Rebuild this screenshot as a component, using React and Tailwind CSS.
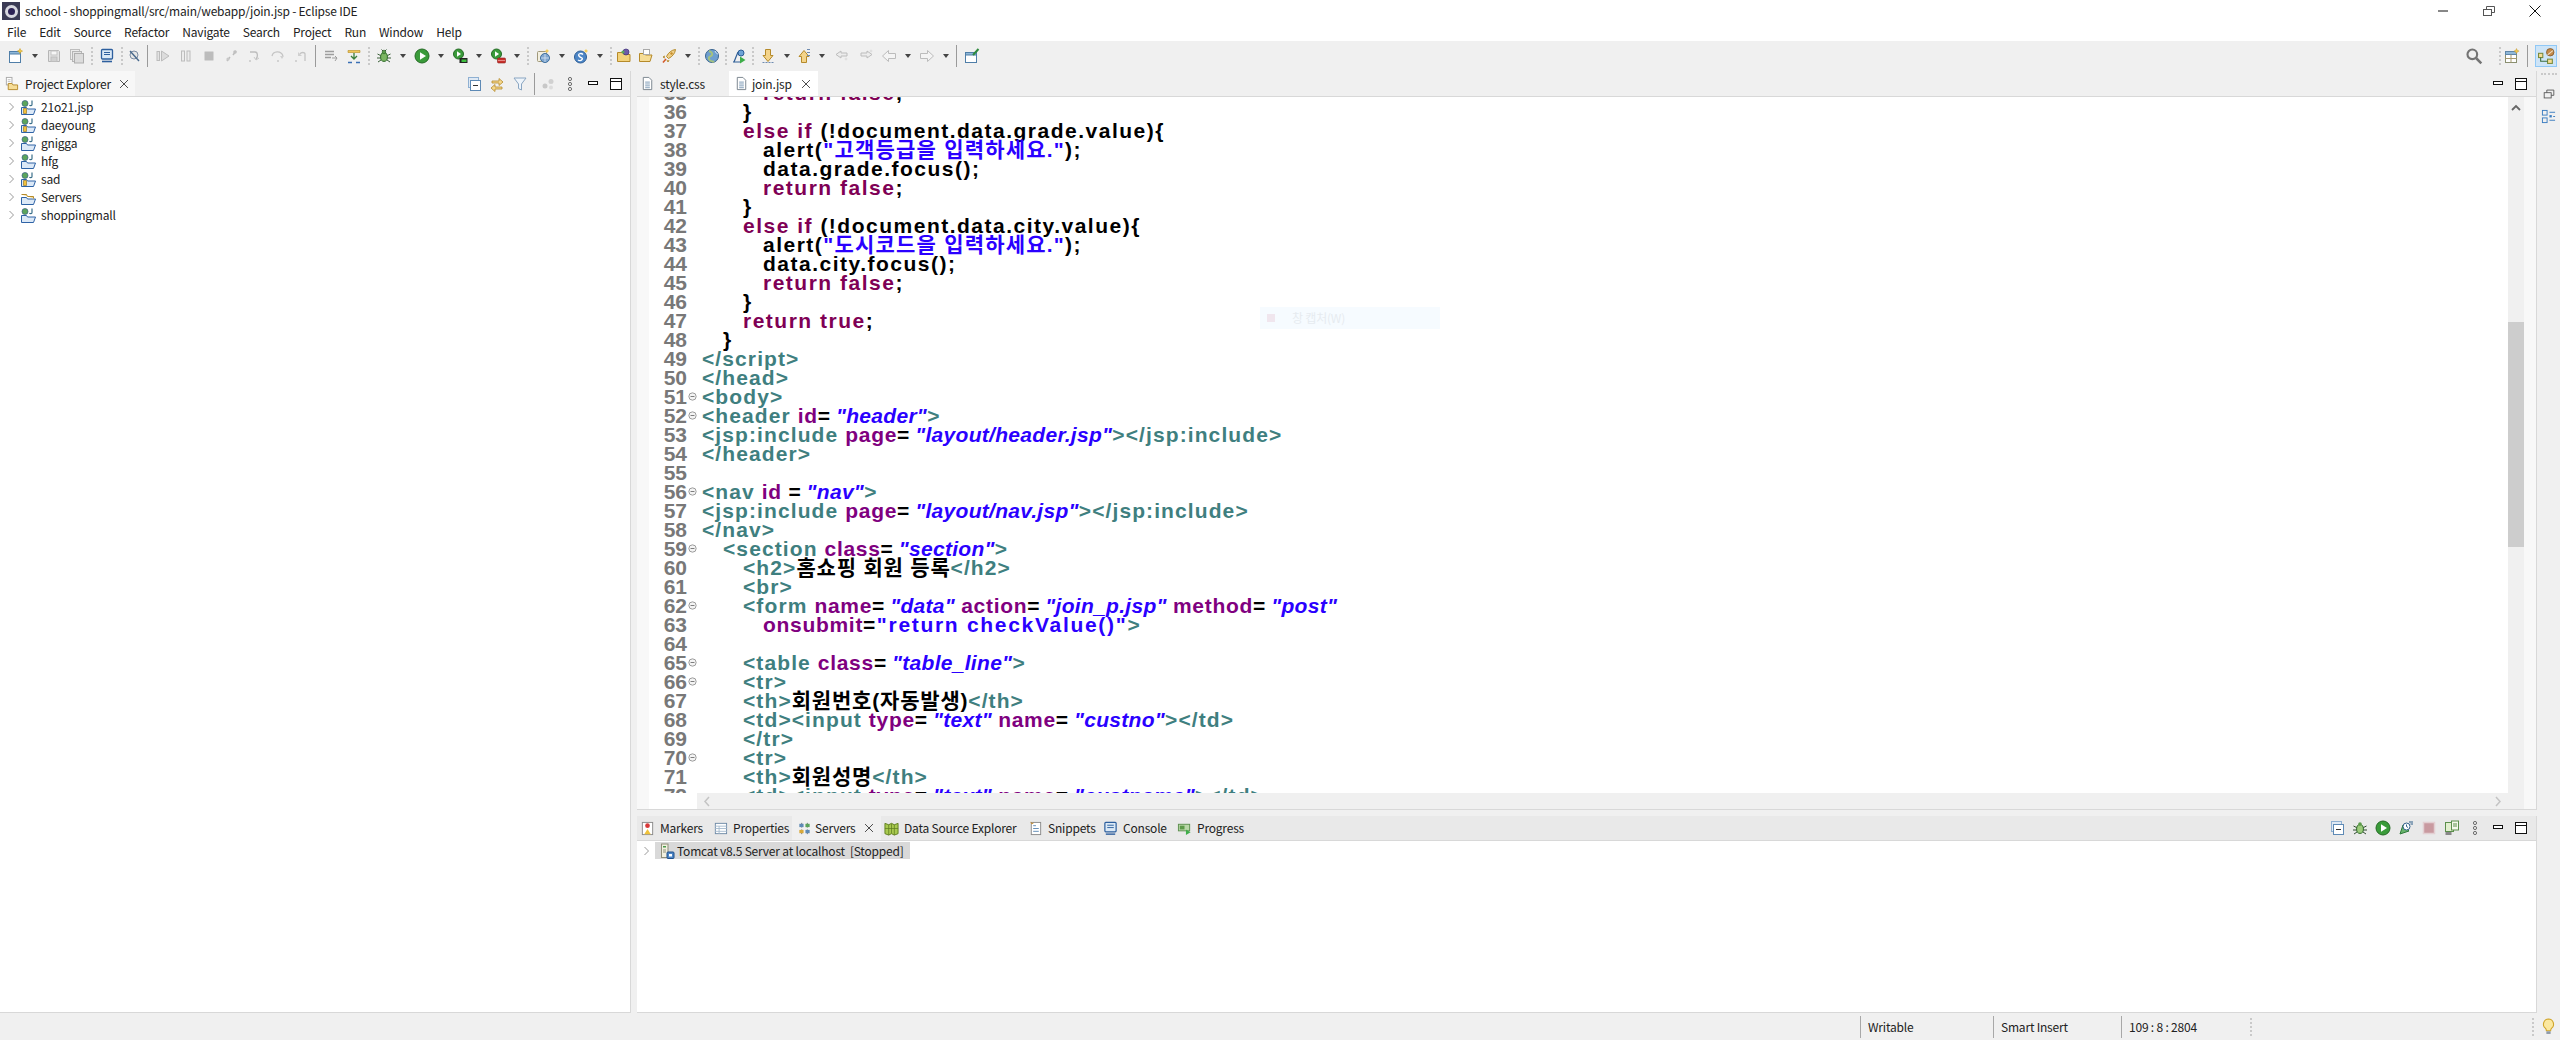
import React from "react";

const Svg = ({ size = 16, children, className = "" }) => (
    <svg width={size} height={size} viewBox="0 0 16 16" fill="none" className={className}>
        {children}
    </svg>
);

// toolbar + view icons, roughly how eclipse draws them
const icons = {
    newFile: <><rect x="1.5" y="3.5" width="11" height="11" fill="#fff" stroke="#4f7ea8" /><rect x="1.5" y="3.5" width="11" height="2.5" fill="#8fb7d8" stroke="#4f7ea8" /><path d="M12 .5l.8 1.8 1.8.8-1.8.8-.8 1.8-.8-1.8-1.8-.8 1.8-.8z" fill="#f3c94b" stroke="#c69a1e" strokeWidth=".5" /></>,
    save: <><path d="M2.5 2.5h10l1 1v10h-11z" fill="#e4e4e4" stroke="#b5b5b5" /><rect x="5" y="3" width="6" height="4" fill="#f6f6f6" stroke="#c4c4c4" /><rect x="5" y="9" width="6" height="4.5" fill="#d0d0d0" stroke="#bdbdbd" /></>,
    saveAll: <><rect x="1.5" y="1.5" width="9" height="10" fill="#ececec" stroke="#bdbdbd" /><rect x="3.5" y="3.5" width="9" height="10" fill="#e4e4e4" stroke="#b5b5b5" /><rect x="5.5" y="5.5" width="9" height="9.5" fill="#dcdcdc" stroke="#aeaeae" /></>,
    monitor: <><rect x="2.5" y="1.5" width="11" height="9.5" rx="1" fill="#dbe9f6" stroke="#2d5f9e" strokeWidth="1.3" /><path d="M5 4.5h6M5 6.5h6" stroke="#2d5f9e" /><path d="M3 13.5h10" stroke="#2d5f9e" strokeWidth="1.6" /></>,
    skip: <><circle cx="7" cy="7" r="4" fill="#e6e6e6" stroke="#7c8ca3" /><path d="M3 3l9 10" stroke="#47688c" strokeWidth="1.4" /></>,
    resume: <><rect x="2" y="3.5" width="2.5" height="9" fill="#e2e2e2" stroke="#bcbcbc" /><path d="M6.5 3l7.5 5-7.5 5z" fill="#dcdcdc" stroke="#bcbcbc" /></>,
    suspend: <><rect x="3.5" y="3" width="3" height="10" fill="#ececec" stroke="#bcbcbc" /><rect x="9" y="3" width="3" height="10" fill="#ececec" stroke="#bcbcbc" /></>,
    stop: <rect x="3.5" y="3.5" width="9" height="9" rx="1" fill="#bcbcbc" stroke="#d6d6d6" />,
    disconnect: <><path d="M3 13l3-4M9 7l3-4" stroke="#bcbcbc" strokeWidth="1.5" /><circle cx="4" cy="11" r="1.6" fill="#c8c8c8" /><circle cx="11" cy="4" r="1.8" fill="#c0c0c0" /></>,
    stepInto: <><path d="M3 4h5c3 0 3 5 1 7" stroke="#bdbdbd" strokeWidth="1.3" /><path d="M7 9l2 3 3-2" stroke="#c8c8c8" /><circle cx="3" cy="13" r="1" fill="#c8c8c8" /></>,
    stepOver: <><path d="M2 8c1-5 9-6 11 0" stroke="#c4c4c4" strokeWidth="1.3" /><path d="M10 8h4l-2 3z" fill="#d0d0d0" /><circle cx="8" cy="13" r="1" fill="#c8c8c8" /></>,
    stepReturn: <><path d="M12 13V6c0-2-4-2-5 0" stroke="#c4c4c4" strokeWidth="1.3" /><path d="M5 4v4h4z" fill="#d0d0d0" /><circle cx="3" cy="13" r="1" fill="#c8c8c8" /></>,
    dropFrame: <><path d="M2 3.5h9M2 6.5h9M2 9.5h6" stroke="#9d9d9d" strokeWidth="1.3" /><path d="M9 10h5l-2-2M14 10l-2 3" stroke="#9d9d9d" /></>,
    useFilters: <><path d="M2 2.5h12v2H2z" fill="#f0c75a" stroke="#b68c1f" strokeWidth=".6" /><path d="M8 5v6M5 8l3 3 3-3" stroke="#3b7f3b" strokeWidth="1.3" /><path d="M2 14.5h4M10 14.5h4" stroke="#3a6fb5" strokeWidth="1.4" /></>,
    bug: <><ellipse cx="8" cy="9" rx="3.4" ry="4.4" fill="#7bb661" stroke="#2f6b2a" /><circle cx="8" cy="4" r="1.8" fill="#5b9a49" stroke="#2f6b2a" strokeWidth=".7" /><path d="M1.5 6l3 1.5M14.5 6l-3 1.5M1 10h3.5M15 10h-3.5M2 14l3-2M14 14l-3-2M5.5 1.5L7 3M10.5 1.5L9 3" stroke="#264f24" strokeWidth=".9" /></>,
    run: <><circle cx="8" cy="8" r="7" fill="#3a9b3a" stroke="#256b25" /><path d="M6 4.2L12 8l-6 3.8z" fill="#fff" /></>,
    runServer: <><circle cx="6.5" cy="6" r="5" fill="#3a9b3a" stroke="#256b25" /><path d="M5 3.2L9 6 5 8.8z" fill="#fff" /><rect x="7.5" y="10" width="8" height="5" fill="#222" /><rect x="9.5" y="11.5" width="5" height="2.5" fill="#3fbf3f" /></>,
    runExt: <><circle cx="6.5" cy="6" r="5" fill="#3a9b3a" stroke="#256b25" /><path d="M5 3.2L9 6 5 8.8z" fill="#fff" /><rect x="7.5" y="10" width="8" height="5" rx="1" fill="#c9302c" stroke="#8e1d1a" strokeWidth=".6" /><path d="M8 12.5h7" stroke="#f1b0ae" strokeWidth=".7" /></>,
    server: <><rect x="2.5" y="3.5" width="9" height="10" rx="1" fill="#f2efe0" stroke="#a0987a" /><circle cx="10" cy="10" r="4.5" fill="#7fa6cf" stroke="#3d6f9f" /><path d="M6 10h8M10 6v8" stroke="#d7e6f4" strokeWidth=".8" /><path d="M12 .8l.7 1.5 1.5.7-1.5.7-.7 1.5-.7-1.5L9.8 3l1.5-.7z" fill="#f3c94b" /></>,
    spring: <><circle cx="7.5" cy="9" r="6" fill="#4d86c6" stroke="#2c5d96" /><path d="M10 6.5C8 4.5 4.5 6 6 8s4.5 1.5 3 3.5-4 .5-4 .5" stroke="#fff" strokeWidth="1.3" /><path d="M13 .8l.7 1.5 1.5.7-1.5.7-.7 1.5-.7-1.5-1.5-.7 1.5-.7z" fill="#f3c94b" /></>,
    openFolder: <><path d="M1.5 4.5h5l1.5 2h6v7h-12.500z" fill="#f3d27a" stroke="#b58a2a" /><circle cx="10" cy="4" r="3" fill="#6e5aa8" stroke="#3e2f78" strokeWidth=".7" /><circle cx="7" cy="4" r="1.6" fill="#5ba55b" /></>,
    openFile: <><path d="M1.500 5.500h5l1 1.500h6.500l-2 6.500H1.500z" fill="#f6dd97" stroke="#b58a2a" /><rect x="5.5" y="1.500" width="6" height="5" fill="#fff" stroke="#a9a9a9" /></>,
    rocket: <><path d="M14.500 1.500c-4 .5-7 3-9 7l2 2c4-2 6.500-5 7-9z" fill="#f0d08a" stroke="#b58a2a" /><path d="M5 11l-3 3.500" stroke="#d45a2a" strokeWidth="1.600" /><circle cx="10.500" cy="5.500" r="1.200" fill="#c58c2a" /><path d="M4 8l-2 1 2 1M8 12l-1 2-1-2" stroke="#b58a2a" /></>,
    globe: <><circle cx="8" cy="8" r="6.500" fill="#6e9fd0" stroke="#39648f" /><path d="M5 3c2 1 4 2 3 4S4 8 5 11s4 2 5 3" stroke="#a4c27f" strokeWidth="2" /><path d="M11 3c1 2 2 3 3 3" stroke="#dce9f4" strokeWidth="1" /></>,
    refPerson: <><circle cx="10" cy="5" r="3" fill="#6ea3d6" stroke="#2c5d96" /><path d="M3 14l4-10" stroke="#2c5d96" strokeWidth="1.200" /><path d="M2 14h7" stroke="#2c5d96" /><path d="M9 8.500l5.500 3.500-5.500 3.500z" fill="#3fae4a" /></>,
    nextAnn: <><path d="M5.500 1.500h5v6h2.500l-5 6-5-6h2.500z" fill="#f4d48a" stroke="#b58a2a" /><path d="M2.500 14.500h11" stroke="#6e8bb0" strokeWidth="1" strokeDasharray="2 1" /></>,
    prevAnn: <><path d="M5.500 14.500h5v-6h2.500l-5-6-5 6h2.500z" fill="#f4d48a" stroke="#b58a2a" /><path d="M11 1.500h3M11 4.500h3M11 7.500h3" stroke="#6e8bb0" /></>,
    lastEdit: <><path d="M7 3L2 6.500 7 10V8h6V5H7z" fill="#ececec" stroke="#bcbcbc" /><path d="M12 9l.5 1.500 1.500.5-1.500.5L12 13l-.5-1.500-1.500-.5 1.500-.5z" fill="#d8d8d8" /></>,
    lastEdit2: <><path d="M9 3l5 3.500L9 10V8H3V5h6z" fill="#ececec" stroke="#bcbcbc" /><path d="M13 1l.5 1.500L15 3l-1.500.5L13 5l-.5-1.500L11 3l1.500-.5z" fill="#d8d8d8" /></>,
    back: <path d="M7.500 2.500L1.500 8l6 5.500V10.500h7v-5h-7z" fill="#f4f4f4" stroke="#bcbcbc" />,
    forward: <path d="M8.500 2.500l6 5.500-6 5.500V10.500h-7v-5h7z" fill="#f4f4f4" stroke="#bcbcbc" />,
    pin: <><rect x="1.500" y="4.500" width="11" height="10" fill="#fff" stroke="#4f7ea8" /><rect x="1.500" y="4.500" width="11" height="2.500" fill="#8fb7d8" stroke="#4f7ea8" /><path d="M14.500 1L9 7" stroke="#2f8a3e" strokeWidth="2" /></>,
    collapse: <><rect x="2.500" y="1.500" width="10" height="10" fill="#dfe9f4" stroke="#8fb0d2" /><rect x="4.500" y="4.500" width="10" height="10" fill="#fff" stroke="#5e8ab5" /><path d="M7 9.500h5" stroke="#333" /></>,
    link: <><path d="M3 5h7V2.500L14 6l-4 3.500V7H3z" fill="#f5d88e" stroke="#b58a2a" strokeWidth=".8" /><path d="M13 11H6V8.500L2 12l4 3.500V13h7z" fill="#f5d88e" stroke="#b58a2a" strokeWidth=".8" /></>,
    filter: <path d="M2 2h12L9.500 8v6l-3 -1.500V8z" fill="#eef4fa" stroke="#8aa6c2" />,
    focus: <><circle cx="5" cy="10" r="2.500" fill="#c8c8c8" /><circle cx="11" cy="5.500" r="2.500" fill="#d0d0d0" /><circle cx="11" cy="11.500" r="2" fill="#dcdcdc" /></>,
    kebab: <><circle cx="8" cy="3" r="1.600" stroke="#6e6e6e" /><circle cx="8" cy="8" r="1.600" stroke="#6e6e6e" /><circle cx="8" cy="13" r="1.600" stroke="#6e6e6e" /></>,
    min: <rect x="3.500" y="5.500" width="9" height="3" stroke="#111" fill="#fff" />,
    max: <><rect x="2.500" y="2.500" width="11" height="11" stroke="#111" fill="#fff" /><path d="M3 5.500h10" stroke="#111" /></>,
    close: <path d="M3.500 3.500l9 9M12.500 3.500l-9 9" stroke="#333" strokeWidth="1" />,
    projectExp: <><rect x="2.500" y="1.500" width="6" height="8" fill="#fff" stroke="#a9a9a9" /><path d="M4 4h3M4 6h3" stroke="#bbb" /><path d="M4.500 8h4l1 1.500h5v5h-10z" fill="#f6dd97" stroke="#b58a2a" /></>,
    file: <><path d="M3.500 1.500h6l3 3v10h-9z" fill="#fff" stroke="#77828c" /><path d="M5.500 6.500h5M5.500 8.500h5M5.500 10.500h5M5.500 12.500h5" stroke="#7d9ab5" /></>,
    markers: <><rect x="2.500" y="1.500" width="11" height="13" fill="#fff" stroke="#8a8a8a" /><circle cx="8" cy="5" r="2.500" fill="#d83a3a" /><path d="M8 8.500l3.500 5.500h-7z" fill="#f0c23a" /></>,
    properties: <><rect x="2.500" y="2.500" width="12" height="11" fill="#fff" stroke="#6e8aa6" /><path d="M2.500 5.500h12M6.500 5.500v8M2.500 8h12M2.500 11h12" stroke="#a8bccf" /></>,
    servers: <><path d="M5 2v5M11 2v5M5 9v5M11 9v5" stroke="#6f6f6f" /><rect x="2.500" y="3" width="4.500" height="3.500" fill="#5e8ab5" /><rect x="9" y="3" width="4.500" height="3.500" fill="#5aa35a" /><rect x="2.500" y="9.500" width="4.500" height="3.500" fill="#d8a93a" /><rect x="9" y="9.500" width="4.500" height="3.500" fill="#5e8ab5" /></>,
    dataSource: <><path d="M1 2.500l4 1.500 3-1.500 3 1.500 4-1.500v11l-4 1.500-3-1.500-3 1.500-4-1.500z" fill="#a8c94f" stroke="#5f7e1f" /><path d="M5 4v11M8 3v10M11 4v11M1 8h14" stroke="#5f7e1f" strokeWidth=".8" /></>,
    snippets: <><rect x="3.500" y="1.500" width="10" height="13" fill="#fff" stroke="#8a8a8a" /><path d="M5.500 5h3M5.500 8h6M5.500 11h6" stroke="#5e8ab5" /><path d="M3 1l1 2 2-1" stroke="#c68a2a" /></>,
    console: <><rect x="2" y="1.500" width="12" height="10" rx="1" fill="#dbe9f6" stroke="#2d5f9e" strokeWidth="1.300" /><path d="M4.500 4.500h7M4.500 7h7" stroke="#2d5f9e" /><path d="M3 14h10" stroke="#2d5f9e" strokeWidth="1.500" /></>,
    progress: <><rect x="1.500" y="3.500" width="12" height="7" fill="#b9d7a8" stroke="#5c8f4d" /><rect x="3" y="5" width="5" height="4" fill="#5c9a49" /><path d="M9.500 9l5 3-5 3z" fill="#3fae4a" /></>,
    tomcat: <><rect x="2.500" y="1" width="6.500" height="13.500" fill="#f2f0df" stroke="#8f8f7a" /><rect x="4" y="3" width="3" height="1.500" fill="#4a9a4a" /><path d="M4 7h3M4 9h3" stroke="#8f8f7a" /><rect x="8" y="9" width="7" height="6.500" rx="1" fill="#4d86c6" stroke="#1f4f8a" /><rect x="10" y="11" width="3" height="2.500" fill="#fff" /></>,
    debugSrv: <><ellipse cx="8" cy="9" rx="3.400" ry="4.400" fill="#9ccc7b" stroke="#2f6b2a" /><circle cx="8" cy="4" r="1.800" fill="#5b9a49" /><path d="M1.500 6l3 1.500M14.500 6l-3 1.500M1 10h3.500M15 10h-3.500M2 14l3-2M14 14l-3-2" stroke="#1e3d1c" strokeWidth=".9" /></>,
    profile: <><path d="M2 14l3-9 6 6z" fill="#68b36b" stroke="#2f7a3a" /><circle cx="8.500" cy="6.500" r="3.500" fill="#fff" stroke="#2f5f8a" /><path d="M8.500 4.500v2l1.500 1M11 2h4M12.500 4H15" stroke="#2f5f8a" /></>,
    stopSrv: <rect x="2.500" y="2.500" width="11" height="11" fill="#c99aa0" stroke="#e3cfd2" strokeWidth="1.500" />,
    publish: <><rect x="1.500" y="2.500" width="8" height="9" fill="#e2efcf" stroke="#5c8f4d" /><rect x="7.500" y="1" width="7" height="9" fill="#f4f9ec" stroke="#5c8f4d" /><path d="M9 4h4M9 6h4" stroke="#5c8f4d" /><rect x="1.500" y="12" width="6" height="3" fill="#888" /></>,
    search: <><circle cx="6.500" cy="6.500" r="4.300" stroke="#747474" strokeWidth="1.900" /><path d="M10 10l4.500 4.500" stroke="#747474" strokeWidth="2.200" /></>,
    perspective: <><rect x="1.500" y="3.500" width="11" height="11" fill="#fff" stroke="#8a8f70" /><rect x="1.500" y="3.500" width="11" height="3" fill="#8fb7d8" stroke="#5f86a8" /><path d="M7 6.500v8M1.500 10.500h11" stroke="#a89a6e" /><path d="M12.500 .5l.8 1.800 1.800.8-1.800.8-.8 1.800-.8-1.800-1.800-.8 1.800-.8z" fill="#f3c94b" stroke="#b58a2a" strokeWidth=".4" /></>,
    jee: <><circle cx="11.500" cy="4" r="3.500" fill="#c48a4a" stroke="#7a4f22" strokeWidth=".7" /><path d="M9 6.500l5-4" stroke="#eee0c8" /><rect x=".5" y="5" width="4" height="4" fill="#f6dd97" stroke="#7a8a3a" /><rect x="9" y="10.500" width="4.500" height="4" fill="#f6dd97" stroke="#7a8a3a" /><path d="M2.500 9v3.500H9" stroke="#3e6f3e" /></>,
    restore: <><rect x="2.500" y="6.500" width="8" height="6" stroke="#555" /><path d="M5.500 6.500v-3h8v6h-3" stroke="#555" /></>,
    outline: <><rect x="1.500" y="1.500" width="5" height="5" stroke="#3a7cc0" /><rect x="1.500" y="9.500" width="5" height="5" stroke="#3a7cc0" /><path d="M9 3.500h6M9 12h6" stroke="#3a7cc0" /><rect x="9" y="6.500" width="2.500" height="2.500" fill="#3a7cc0" /><path d="M13 8h2" stroke="#3a7cc0" /></>,
    foldMinus: <><circle cx="8" cy="8" r="6.500" fill="#f4f4f4" stroke="#8c8c8c" strokeWidth="1.500" /><path d="M4.500 8h7" stroke="#666" strokeWidth="1.500" /></>,
    bulb: <><path d="M8 1a4.800 4.800 0 00-3 8.500c.7.700 1 1.500 1 2.500h4c0-1 .3-1.800 1-2.500A4.800 4.800 0 008 1z" fill="#fbe8a0" stroke="#d0a52a" /><rect x="6" y="12.500" width="4" height="2.500" fill="#8e9aa8" /></>,
};

const Ico = ({ n, size = 16, className }) => <Svg size={size} className={className}>{icons[n]}</Svg>;

const Btn = ({ n, w = "w-[23px]" }) => (
    <div className={`${w} h-full flex items-center justify-center shrink-0`}>
        <Ico n={n} />
    </div>
);
const Drop = () => (
    <div className="w-[15px] h-full flex items-center justify-center shrink-0">
        <div className="w-0 h-0 border-x-[3.5px] border-x-transparent border-t-[4px] border-t-[#444]"></div>
    </div>
);
const Dots = () => (
    <div className="w-[7px] h-full flex items-center justify-center shrink-0">
        <div className="h-[18px] border-l-2 border-dotted border-[#c9c9c9]"></div>
    </div>
);
const Sep = () => (
    <div className="w-[7px] h-full flex items-center justify-center shrink-0">
        <div className="h-[22px] w-px bg-[#9a9a9a]"></div>
    </div>
);

const Toolbar = () => (
    <div className="h-[30px] flex items-center bg-[#f0f0f0]">
        <div className="w-[4px] shrink-0"></div>
        <Btn n="newFile" /><Drop /><Btn n="save" /><Btn n="saveAll" /><Dots />
        <Btn n="monitor" /><Dots /><Btn n="skip" w="w-[19px]" /><Sep />
        <Btn n="resume" /><Btn n="suspend" /><Btn n="stop" /><Btn n="disconnect" />
        <Btn n="stepInto" /><Btn n="stepOver" /><Btn n="stepReturn" /><Sep />
        <Btn n="dropFrame" /><Btn n="useFilters" /><Dots />
        <Btn n="bug" /><Drop /><Btn n="run" /><Drop /><Btn n="runServer" /><Drop /><Btn n="runExt" /><Drop /><Dots />
        <Btn n="server" /><Drop /><Btn n="spring" /><Drop /><Dots />
        <Btn n="openFolder" w="w-[20px]" /><Btn n="openFile" /><Btn n="rocket" /><Drop /><Dots />
        <Btn n="globe" w="w-[20px]" /><Dots /><Btn n="refPerson" w="w-[20px]" /><Dots />
        <Btn n="nextAnn" /><Drop /><Btn n="prevAnn" w="w-[20px]" /><Drop />
        <Btn n="lastEdit" w="w-[25px]" /><Btn n="lastEdit2" /><Btn n="back" /><Drop />
        <Btn n="forward" w="w-[23px]" /><Drop /><Sep /><Btn n="pin" />
        <div className="flex-1"></div>
        <Ico n="search" size={18} />
        <div className="w-[13px]"></div>
        <Dots />
        <Btn n="perspective" w="w-[18px]" />
        <div className="w-[3px]"></div>
        <Sep />
        <div className="w-[22px] h-[22px] ml-[4px] mr-[3px] flex items-center justify-center bg-[#cde4f7] border border-[#90c8f6]">
            <Ico n="jee" size={17} />
        </div>
    </div>
);

const Tab = ({ icon, label, w }) => (
    <div className={`h-full flex items-center shrink-0 ${w}`}>
        <Ico n={icon} size={15} className="ml-[3px] mr-[5px] shrink-0" />
        <span>{label}</span>
    </div>
);

const projects = [
    { name: "21o21.jsp", warn: true },
    { name: "daeyoung", warn: true },
    { name: "gnigga" },
    { name: "hfg" },
    { name: "sad", warn: true },
    { name: "Servers", folder: true },
    { name: "shoppingmall" },
];

const ProjectIcon = ({ warn, folder }) => (
    <svg width="17" height="17" viewBox="0 0 17 17" fill="none" className="shrink-0">
        <path d="M1.500 8.500h5l1 1.500h8l-2 5.500H1.500z" fill="#dce9f7" stroke="#2e63a6" />
        {folder ? (
            <path d="M1.500 5.500h5l1 2h6v2" stroke="#b58a2a" fill="#f6dd97" />
        ) : (
            <>
                <circle cx="5" cy="4.500" r="3" fill="#5ba55b" stroke="#3a5f8a" strokeWidth=".7" />
                <path d="M12 1.500v4c0 1.500-2 1.500-2.500.5" stroke="#3a6f8a" strokeWidth="1.200" />
            </>
        )}
        {warn && <path d="M3.500 9.500h3v5h-3z" fill="#f3c13a" stroke="#8a6a1a" strokeWidth=".6" />}
    </svg>
);

const Chevron = () => (
    <svg width="7" height="10" viewBox="0 0 7 10" fill="none" className="shrink-0">
        <path d="M1.500 1l4 4-4 4" stroke="#9a9a9a" />
    </svg>
);

const ProjectExplorer = () => (
    <div className="w-[631px] h-full bg-white border-r border-b border-[#d8d8d8] flex flex-col shrink-0">
        <div className="h-[26px] flex items-center bg-[#f0f0f0] border-b border-[#d8d8d8]">
            <div className="w-[135px] h-full flex items-center bg-[#f7f7f7] shrink-0">
                <Ico n="projectExp" size={15} className="ml-[4px] mr-[6px] shrink-0" />
                <span>Project Explorer</span>
                <Ico n="close" size={14} className="ml-[6px]" />
            </div>
            <div className="flex-1"></div>
            <div className="flex items-center h-full pr-[3px]">
                <Btn n="collapse" /><Btn n="link" /><Btn n="filter" />
                <Sep />
                <Btn n="focus" w="w-[20px]" /><Btn n="kebab" /><Btn n="min" /><Btn n="max" />
            </div>
        </div>
        <div className="pl-[8px] pt-[1px]">
            {projects.map((p) => (
                <div key={p.name} className="h-[18px] flex items-center">
                    <Chevron />
                    <div className="ml-[5px] mr-[4px]"><ProjectIcon warn={p.warn} folder={p.folder} /></div>
                    <span>{p.name}</span>
                </div>
            ))}
        </div>
    </div>
);

// syntax colours, the black text runs a bit wider than the markup in the original font
const t = "text-[#3f7f7f] tracking-[1.1px]";
const a = "text-[#7f007f] tracking-[0.7px]";
const v = "text-[#2a00ff] italic tracking-[0.3px]";
const s = "text-[#2a00ff] tracking-[1.2px]";
const s2 = "text-[#2a00ff] tracking-[1.7px]";
const k = "text-[#7f0055] tracking-[1.5px]";
const b = "text-black tracking-[1.5px]";
const h = "text-black tracking-[0.8px]";
const e = "text-black";

const indent = ["pl-0", "pl-[21px]", "pl-[41px]", "pl-[61px]"];

const lines = [
    [35, 3, [[k, "return false"], [b, ";"]]],
    [36, 2, [[b, "}"]]],
    [37, 2, [[k, "else if "], [b, "(!document.data.grade.value){"]]],
    [38, 3, [[b, "alert("], [s, "\"고객등급을 입력하세요.\""], [b, ");"]]],
    [39, 3, [[b, "data.grade.focus();"]]],
    [40, 3, [[k, "return false"], [b, ";"]]],
    [41, 2, [[b, "}"]]],
    [42, 2, [[k, "else if "], [b, "(!document.data.city.value){"]]],
    [43, 3, [[b, "alert("], [s, "\"도시코드을 입력하세요.\""], [b, ");"]]],
    [44, 3, [[b, "data.city.focus();"]]],
    [45, 3, [[k, "return false"], [b, ";"]]],
    [46, 2, [[b, "}"]]],
    [47, 2, [[k, "return true"], [b, ";"]]],
    [48, 1, [[b, "}"]]],
    [49, 0, [[t, "</script>"]]],
    [50, 0, [[t, "</head>"]]],
    [51, 0, [[t, "<body>"]], true],
    [52, 0, [[t, "<header "], [a, "id"], [e, "= "], [v, "\"header\""], [t, ">"]], true],
    [53, 0, [[t, "<jsp:include "], [a, "page"], [e, "= "], [v, "\"layout/header.jsp\""], [t, "></jsp:include>"]]],
    [54, 0, [[t, "</header>"]]],
    [55, 0, []],
    [56, 0, [[t, "<nav "], [a, "id "], [e, "= "], [v, "\"nav\""], [t, ">"]], true],
    [57, 0, [[t, "<jsp:include "], [a, "page"], [e, "= "], [v, "\"layout/nav.jsp\""], [t, "></jsp:include>"]]],
    [58, 0, [[t, "</nav>"]]],
    [59, 1, [[t, "<section "], [a, "class"], [e, "= "], [v, "\"section\""], [t, ">"]], true],
    [60, 2, [[t, "<h2>"], [h, "홈쇼핑 회원 등록"], [t, "</h2>"]]],
    [61, 2, [[t, "<br>"]]],
    [62, 2, [[t, "<form "], [a, "name"], [e, "= "], [v, "\"data\" "], [a, "action"], [e, "= "], [v, "\"join_p.jsp\" "], [a, "method"], [e, "= "], [v, "\"post\""]], true],
    [63, 3, [[a, "onsubmit"], [b, "="], [s2, "\"return checkValue()\""], [t, ">"]]],
    [64, 0, []],
    [65, 2, [[t, "<table "], [a, "class"], [e, "= "], [v, "\"table_line\""], [t, ">"]], true],
    [66, 2, [[t, "<tr>"]], true],
    [67, 2, [[t, "<th>"], [h, "회원번호(자동발생)"], [t, "</th>"]]],
    [68, 2, [[t, "<td><input "], [a, "type"], [e, "= "], [v, "\"text\" "], [a, "name"], [e, "= "], [v, "\"custno\""], [t, "></td>"]]],
    [69, 2, [[t, "</tr>"]]],
    [70, 2, [[t, "<tr>"]], true],
    [71, 2, [[t, "<th>"], [h, "회원성명"], [t, "</th>"]]],
    [72, 2, [[t, "<td><input "], [a, "type"], [e, "= "], [v, "\"text\" "], [a, "name"], [e, "= "], [v, "\"custname\""], [t, "></td>"]]],
];

const CodeLine = ({ line }) => {
    const [num, level, parts, fold] = line;
    return (
        <div className="h-[19px] flex items-center whitespace-pre">
            <div className="w-[38px] text-right text-[#787878] shrink-0">{num}</div>
            <div className="w-[15px] pr-[4px] shrink-0 flex justify-center">
                {fold && <Ico n="foldMinus" size={9} />}
            </div>
            <div className={indent[level]}>
                {parts.map((p, i) => (
                    <span key={i} className={p[0]}>{p[1]}</span>
                ))}
            </div>
        </div>
    );
};

const Editor = () => (
    <div className="h-[739px] bg-white border-r border-b border-[#d8d8d8] flex flex-col shrink-0 relative">
        <div className="h-[26px] flex items-center bg-[#f0f0f0] border-b border-[#d8d8d8] shrink-0">
            <div className="w-[92px] h-full flex items-center shrink-0">
                <Ico n="file" size={15} className="ml-[3px] mr-[5px]" />
                <span>style.css</span>
            </div>
            <div className="w-[89px] h-full flex items-center bg-white shrink-0">
                <Ico n="file" size={15} className="ml-[5px] mr-[3px]" />
                <span>join.jsp</span>
                <Ico n="close" size={14} className="ml-[7px]" />
            </div>
            <div className="flex-1"></div>
            <Btn n="min" /><Btn n="max" />
            <div className="w-[4px]"></div>
        </div>
        <div className="flex-1 flex min-h-0">
            <div className="w-[12px] bg-[#f8f8f8] shrink-0"></div>
            <div className="flex-1 flex flex-col min-w-0">
                <div className="flex-1 overflow-hidden font-['Liberation_Sans','Noto_Sans_CJK_KR',sans-serif] font-bold text-[21px] leading-[19px] tracking-normal min-h-0">
                    <div className="-mt-[14px]">
                        {lines.map((l) => (
                            <CodeLine key={l[0]} line={l} />
                        ))}
                    </div>
                </div>
                <div className="h-[16px] ml-[48px] bg-[#f0f0f0] flex items-center justify-between px-[6px] shrink-0">
                    <svg width="8" height="11" viewBox="0 0 8 11" fill="none"><path d="M6 1L2 5.500 6 10" stroke="#c4c4c4" strokeWidth="1.500" /></svg>
                    <svg width="8" height="11" viewBox="0 0 8 11" fill="none"><path d="M2 1l4 4.500L2 10" stroke="#c4c4c4" strokeWidth="1.500" /></svg>
                </div>
            </div>
            <div className="w-[16px] bg-[#f0f0f0] flex flex-col items-center shrink-0">
                <div className="h-[20px] flex items-center">
                    <svg width="10" height="7" viewBox="0 0 10 7" fill="none"><path d="M1 6l4-4 4 4" stroke="#666" strokeWidth="1.800" /></svg>
                </div>
                <div className="mt-[205px] h-[225px] w-full bg-[#cdcdcd]"></div>
            </div>
            <div className="w-[12px] bg-[#f8f8f8] shrink-0"></div>
        </div>
        {/* faded capture tooltip left in the shot */}
        <div className="absolute left-[623px] top-[236px] w-[180px] h-[22px] bg-[#f6fbff] flex items-center text-[#e6ebf0]">
            <div className="w-[8px] h-[8px] ml-[7px] mr-[17px] bg-[#f0e6ee]"></div>
            <span>창 캡처(W)</span>
        </div>
    </div>
);

const BottomPanel = () => (
    <div className="flex-1 mt-[6px] bg-white border-r border-b border-[#d8d8d8] flex flex-col min-h-0">
        <div className="h-[25px] flex items-center bg-[#e9e9e9] border-b border-[#d8d8d8] shrink-0">
            <Tab icon="markers" label="Markers" w="w-[73px]" />
            <Tab icon="properties" label="Properties" w="w-[82px]" />
            <div className="w-[89px] h-full flex items-center bg-[#f0f0f0] shrink-0">
                <Ico n="servers" size={15} className="ml-[5px] mr-[3px]" />
                <span>Servers</span>
                <Ico n="close" size={14} className="ml-[7px]" />
            </div>
            <Tab icon="dataSource" label="Data Source Explorer" w="w-[144px]" />
            <Tab icon="snippets" label="Snippets" w="w-[75px]" />
            <Tab icon="console" label="Console" w="w-[74px]" />
            <Tab icon="progress" label="Progress" w="w-[70px]" />
            <div className="flex-1"></div>
            <Btn n="collapse" /><Btn n="debugSrv" /><Btn n="run" /><Btn n="profile" /><Btn n="stopSrv" /><Btn n="publish" /><Btn n="kebab" /><Btn n="min" /><Btn n="max" />
            <div className="w-[4px]"></div>
        </div>
        <div className="pl-[6px] pt-[1px]">
            <div className="h-[17px] flex items-center">
                <Chevron />
                <div className="ml-[5px] h-[17px] w-[255px] bg-[#d9d9d9] flex items-center">
                    <Ico n="tomcat" size={16} className="ml-[4px] mr-[2px] shrink-0" />
                    <span>Tomcat v8.5 Server at localhost&nbsp;&nbsp;[Stopped]</span>
                </div>
            </div>
        </div>
    </div>
);

const StatusBar = () => (
    <div className="h-[27px] flex items-center bg-[#f0f0f0] shrink-0">
        <div className="w-[1860px] shrink-0"></div>
        <div className="w-[133px] h-[22px] border-l border-[#a8a8a8] pl-[7px] flex items-center">Writable</div>
        <div className="w-[128px] h-[22px] border-l border-[#a8a8a8] pl-[7px] flex items-center">Smart Insert</div>
        <div className="w-[126px] h-[22px] border-l border-[#a8a8a8] pl-[7px] flex items-center">109 : 8 : 2804</div>
        <Dots />
        <div className="flex-1"></div>
        <Dots />
        <div className="w-[24px] flex justify-center"><Ico n="bulb" size={17} /></div>
    </div>
);

const menus = ["File", "Edit", "Source", "Refactor", "Navigate", "Search", "Project", "Run", "Window", "Help"];

const App = () => (
    <div className="w-[2560px] h-[1040px] overflow-hidden flex flex-col bg-[#f0f0f0] text-[#222] text-[12px] tracking-[-0.2px] whitespace-nowrap font-['Noto_Sans_CJK_KR','Noto_Sans',sans-serif]">
        <div className="h-[22px] bg-white flex items-center shrink-0">
            <div className="w-[18px] h-[18px] ml-[2px] mr-[5px] bg-[#3b3b55] flex items-center justify-center">
                <div className="w-[13px] h-[13px] rounded-full bg-[#d8d8e0] flex items-center justify-center">
                    <div className="w-[7px] h-[7px] rounded-full bg-[#2c2255]"></div>
                </div>
            </div>
            <span>school - shoppingmall/src/main/webapp/join.jsp - Eclipse IDE</span>
            <div className="flex-1"></div>
            <div className="flex items-center pr-[2px]">
                <div className="w-[46px] flex justify-center">
                    <svg width="16" height="16" viewBox="0 0 16 16" fill="none"><path d="M3 8h10" stroke="#111" /></svg>
                </div>
                <div className="w-[46px] flex justify-center"><Ico n="restore" size={16} /></div>
                <div className="w-[46px] flex justify-center">
                    <svg width="16" height="16" viewBox="0 0 16 16" fill="none"><path d="M2.500 2.500l11 11M13.500 2.500l-11 11" stroke="#111" /></svg>
                </div>
            </div>
        </div>
        <div className="h-[19px] bg-white flex items-center gap-[13px] pl-[7px] shrink-0">
            {menus.map((m) => (
                <span key={m}>{m}</span>
            ))}
        </div>
        <Toolbar />
        <div className="flex-1 flex min-h-0">
            <ProjectExplorer />
            <div className="w-[6px] shrink-0"></div>
            <div className="flex-1 flex flex-col min-w-0">
                <Editor />
                <BottomPanel />
            </div>
            <div className="w-[23px] flex flex-col items-center shrink-0">
                <div className="h-[14px] w-[16px] mt-[2px] border-t-2 border-dotted border-[#c9c9c9]"></div>
                <Ico n="restore" size={14} className="mb-[8px]" />
                <Ico n="outline" size={15} />
            </div>
        </div>
        <StatusBar />
    </div>
);

export default App;
